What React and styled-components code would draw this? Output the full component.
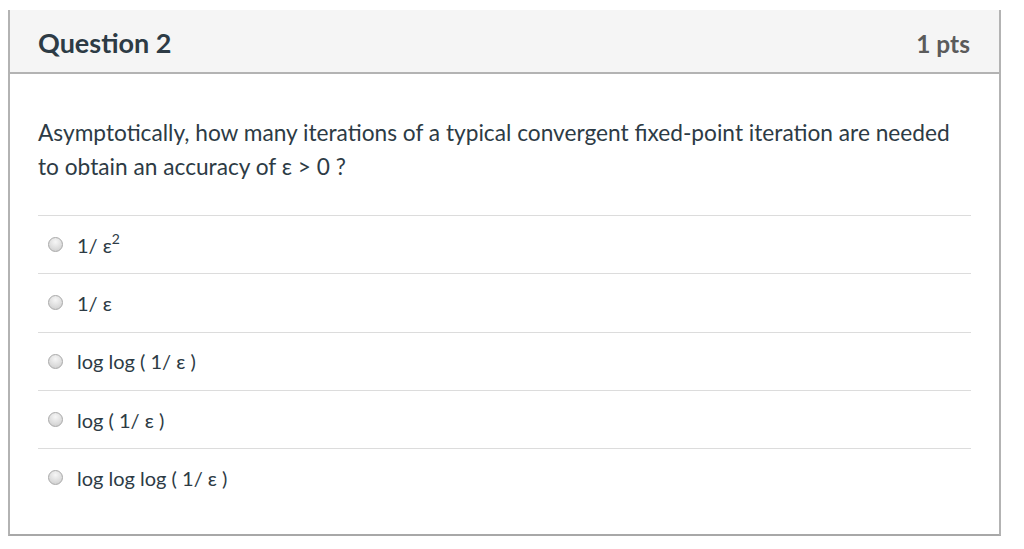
import React from 'react'
import styled, { createGlobalStyle } from 'styled-components'

const GlobalStyle = createGlobalStyle`
    body{
        margin:0;
        background:#fff;
        font-family:Lato, "Open Sans", sans-serif;
        color:#2d3b45;
    }
`

const answers = [
    { id: 'a1', label: <>1/ ε<sup>2</sup></> },
    { id: 'a2', label: <>1/ ε</> },
    { id: 'a3', label: <>log log ( 1/ ε )</> },
    { id: 'a4', label: <>log ( 1/ ε )</> },
    { id: 'a5', label: <>log log log ( 1/ ε )</> },
]

const App = () => {
    return (
        <>
            <GlobalStyle />
            <Page>
                <Card>
                    <Header>
                        <Title>Question 2</Title>
                        <Points>1 pts</Points>
                    </Header>
                    <Body>
                        <QuestionText>
                            Asymptotically, how many iterations of a typical convergent fixed-point iteration are needed to obtain an accuracy of ε &gt; 0 ?
                        </QuestionText>
                        <AnswerList>
                            {answers.map((item) => (
                                <AnswerRow key={item.id}>
                                    <Radio />
                                    <AnswerLabel>{item.label}</AnswerLabel>
                                </AnswerRow>
                            ))}
                        </AnswerList>
                    </Body>
                </Card>
            </Page>
        </>
    )
}

export default App

const Page = styled.div`
    padding:10px 0 0 8px;
`

const Card = styled.div`
    width:993px;
    box-sizing:border-box;
    border-left:2px solid #b3b3b3;
    border-right:2px solid #b3b3b3;
    border-bottom:2px solid #a8a8a8;
    background:#fff;
`

const Header = styled.div`
    height:62px;
    display:flex;
    align-items:center;
    justify-content:space-between;
    padding:0 29px 0 28px;
    background:#f5f5f5;
    border-bottom:2px solid #b3b3b3;
`

const Title = styled.h2`
    margin:0;
    font-size:27px;
    font-weight:700;
    color:#2d3b45;
    padding-top:2px;
`

const Points = styled.div`
    font-size:24.5px;
    font-weight:700;
    color:#5b5b5b;
    padding-top:4px;
`

const Body = styled.div`
    padding:42px 28px 28px 28px;
`

const QuestionText = styled.p`
    margin:0 0 31px 0;
    font-size:22.7px;
    line-height:34px;
    color:#2d3b45;
`

const AnswerList = styled.div`
    display:flex;
    flex-direction:column;
`

const AnswerRow = styled.label`
    height:58.3px;
    box-sizing:border-box;
    display:flex;
    align-items:center;
    gap:14px;
    padding-left:10px;
    border-top:1px solid #dcdcdc;
`

const Radio = styled.span`
    width:15px;
    height:15px;
    border-radius:50%;
    box-sizing:border-box;
    border:1px solid #a9a9a9;
    background:radial-gradient(circle at 50% 30%, #f6f6f6 0%, #dcdcdc 60%, #c8c8c8 100%);
    flex-shrink:0;
`

const AnswerLabel = styled.span`
    font-size:20px;
    color:#2d3b45;
    sup{
        font-size:14px;
        line-height:0;
        vertical-align:9px;
    }
`
